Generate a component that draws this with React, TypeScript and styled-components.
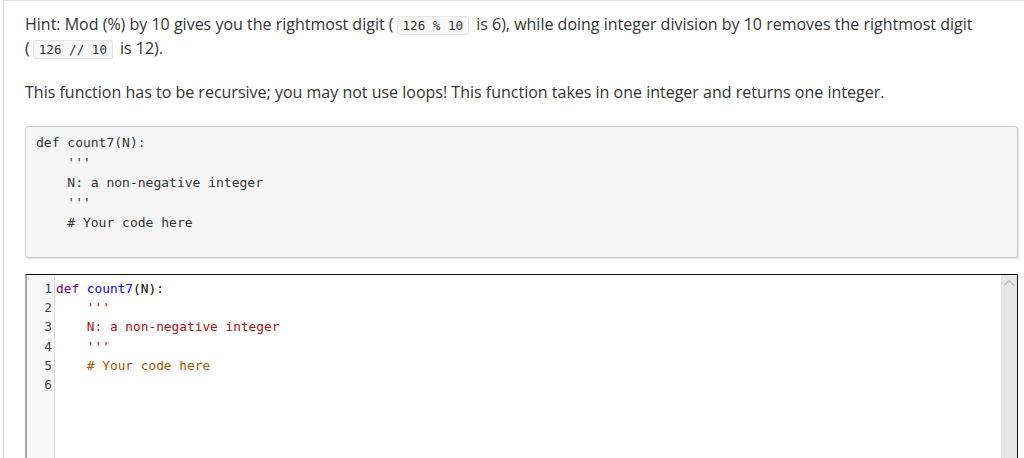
import * as React from 'react';
import styled, { createGlobalStyle } from 'styled-components';

const GlobalStyle = createGlobalStyle`
  html, body {
    margin: 0;
    padding: 0;
    background: #fff;
    overflow: hidden;
  }
  body {
    font-family: "Open Sans", "Liberation Sans", sans-serif;
    color: #333;
  }
`;

const Panel = styled.div`
  margin-left: 3px;
  border-left: 1px solid #cfcfcf;
  border-top: 1px solid #e3e3e3;
  padding: 12px 6px 40px 21px;
  min-height: 460px;
`;

const Para = styled.p`
  margin: 0 0 20px;
  font-size: 16px;
  line-height: 22px;
`;

const NoWrap = styled.span`
  white-space: nowrap;
`;

const Code = styled.code`
  font-family: "DejaVu Sans Mono", "Liberation Mono", monospace;
  font-size: 12.6px;
  background: #f7f7f7;
  border: 1px solid #e4e4e4;
  border-radius: 3px;
  padding: 1px 5px;
  margin: 0 7px 0 3px;
  color: #333;
`;

const Pre = styled.pre`
  margin: 23px 0 16px;
  padding: 6px 10px 4px;
  font-family: "DejaVu Sans Mono", "Liberation Mono", monospace;
  font-size: 13px;
  line-height: 20px;
  color: #333;
  background: #f5f5f5;
  border: 1px solid #cccccc;
  border-radius: 3px;
  box-shadow: 1px 1px 0 #dcdcdc;
`;

const Editor = styled.div`
  display: flex;
  height: 200px;
  border: 1px solid #111;
  border-left: 2px solid #a6a6a6;
  background: #fff;
`;

const Gutter = styled.div`
  width: 28px;
  padding-top: 4px;
  background: #f7f7f7;
  border-right: 1px solid #dddddd;
  font-family: "DejaVu Sans Mono", "Liberation Mono", monospace;
  font-size: 12.8px;
  line-height: 19.2px;
  color: #444;
  text-align: right;
  box-sizing: border-box;
  padding-right: 2px;
`;

const Lines = styled.div`
  flex: 1;
  padding: 4px 0 0 1px;
  font-family: "DejaVu Sans Mono", "Liberation Mono", monospace;
  font-size: 12.8px;
  line-height: 19.2px;
  color: #000;
  white-space: pre;
`;

const Line = styled.div`
  min-height: 19.2px;
`;

const Tok = styled.span<{ $kind: 'kw' | 'def' | 'str' | 'cm' }>`
  color: ${({ $kind }) =>
    $kind === 'kw' ? '#770088' : $kind === 'def' ? '#0000ff' : $kind === 'str' ? '#aa1111' : '#aa5500'};
`;

const Scrollbar = styled.div`
  width: 16px;
  background: #e6e6e6;
  display: flex;
  justify-content: center;
  padding-top: 4px;
  box-sizing: border-box;
`;

const ChevronUp = () => (
  <svg width="12" height="8" viewBox="0 0 12 8">
    <path d="M1 6.5 L6 1.5 L11 6.5" fill="none" stroke="#b8b8b8" strokeWidth="1.2" />
  </svg>
);

const lineNumbers = [1, 2, 3, 4, 5, 6];

export default function App() {
  return (
    <>
      <GlobalStyle />
      <Panel>
        <Para>
          Hint: Mod (%) by 10 gives you the rightmost digit (<Code>126 % 10</Code>is 6), while doing integer
          division by 10 removes the rightmost digit{' '}
          <NoWrap>
            (<Code>126 // 10</Code>is 12).
          </NoWrap>
        </Para>
        <Para>
          This function has to be recursive; you may not use loops! This function takes in one integer and returns
          one integer.
        </Para>
        <Pre>
          {`def count7(N):
    '''
    N: a non-negative integer
    '''
    # Your code here

`}
        </Pre>
        <Editor>
          <Gutter>
            {lineNumbers.map((n) => (
              <Line key={n}>{n}</Line>
            ))}
          </Gutter>
          <Lines>
            <Line>
              <Tok $kind="kw">def</Tok> <Tok $kind="def">count7</Tok>(N):
            </Line>
            <Line>
              {'    '}
              <Tok $kind="str">'''</Tok>
            </Line>
            <Line>
              {'    '}
              <Tok $kind="str">N: a non-negative integer</Tok>
            </Line>
            <Line>
              {'    '}
              <Tok $kind="str">'''</Tok>
            </Line>
            <Line>
              {'    '}
              <Tok $kind="cm"># Your code here</Tok>
            </Line>
            <Line />
          </Lines>
          <Scrollbar>
            <ChevronUp />
          </Scrollbar>
        </Editor>
      </Panel>
    </>
  );
}
